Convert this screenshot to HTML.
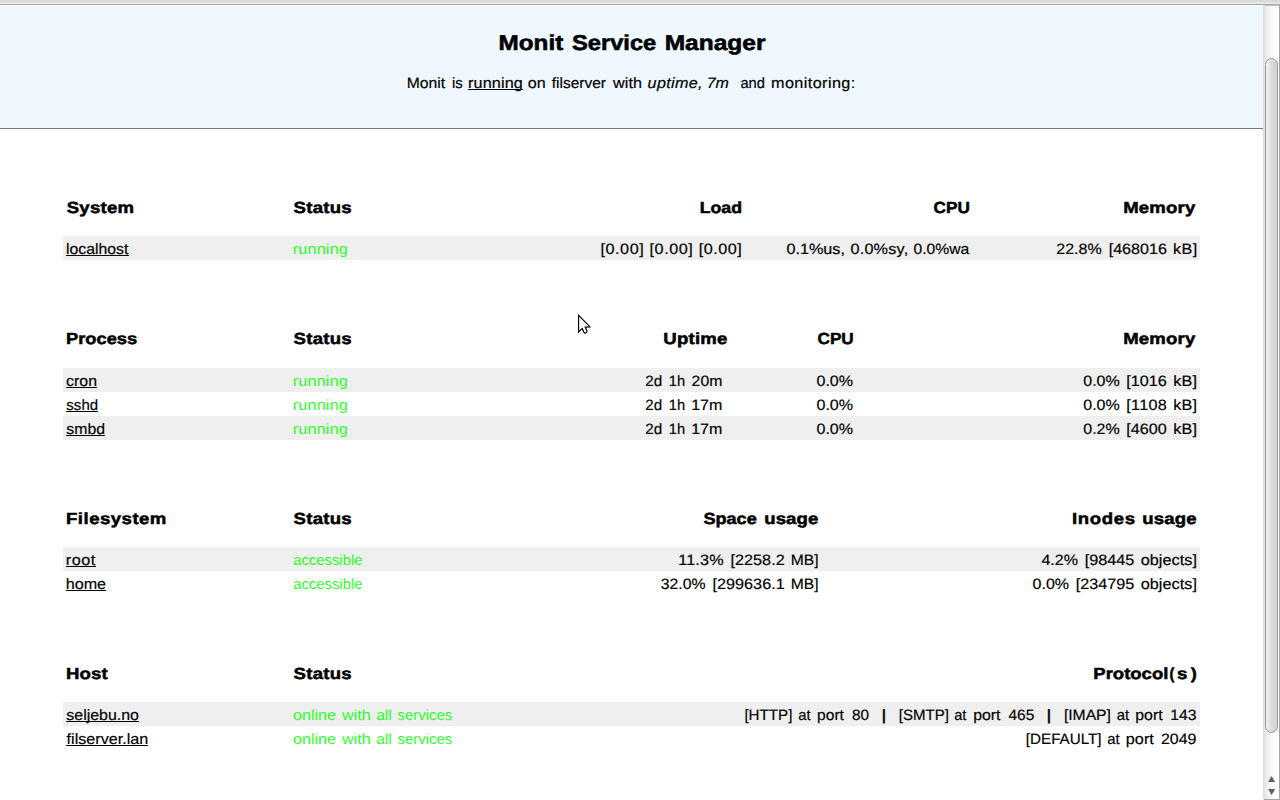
<!DOCTYPE html>
<html lang="en"><head><meta charset="utf-8"><title>Monit: filserver</title>
<style>
html,body{margin:0;padding:0;width:1280px;height:800px;overflow:hidden;background:#fff}
body{position:relative;font-family:"Liberation Sans",sans-serif;}
#strip{position:absolute;left:0;top:0;width:1280px;height:4px;background:linear-gradient(#d5d5d5,#dcdcdc 40%,#ebebeb)}
#stripline{position:absolute;left:0;top:4px;width:1280px;height:1px;background:#a9a9a9}
#head{position:absolute;left:0;top:5px;width:1263px;height:123px;background:#eff7ff;border-bottom:1px solid #777}
#headhl{position:absolute;left:0;top:5px;width:1263px;height:1px;background:#f6fbff}
.stripe{position:absolute;left:63px;width:1137px;height:24px;background:#efefef}
.w{position:absolute;white-space:pre;line-height:normal;transform-origin:0 0;text-rendering:geometricPrecision}
.it{display:inline;margin:0;padding:0;font:inherit;font-weight:inherit;color:inherit;text-decoration:none}
h1.it{font-size:inherit}
.u{position:absolute;height:1px;background:#000;display:block}
.n{font-size:15px;font-weight:400;font-style:normal;color:#000;-webkit-text-stroke:0.18px #000}
.g{font-size:15px;font-weight:400;font-style:normal;color:#00ff00}
.i{font-size:15px;font-weight:400;font-style:italic;color:#000;-webkit-text-stroke:0.18px #000}
.b{font-size:16px;font-weight:700;font-style:normal;color:#000;-webkit-text-stroke:0.5px #000}
.t{font-size:21.5px;font-weight:700;font-style:normal;color:#000;-webkit-text-stroke:0.55px #000}
.s{font-size:15px;font-weight:700;font-style:normal;color:#000;-webkit-text-stroke:0.3px #000}

#sb{position:absolute;left:1263px;top:5px;width:16px;height:794px;background:linear-gradient(90deg,#dadada 0,#e6e6e6 2px,#f1f1f1 5px,#fafafa 9px,#fff 13px)}
#sbr{position:absolute;left:1279px;top:5px;width:1px;height:795px;background:#a9a59a}
#sbb{position:absolute;left:1264px;top:799px;width:16px;height:1px;background:#a9a59a}
#sbt{position:absolute;left:1265px;top:5px;width:14px;height:1px;background:#c9c6bd}
#thumb{position:absolute;left:1265px;top:58px;width:11px;height:673px;border:1px solid #9a9a9a;border-radius:6.5px;background:linear-gradient(90deg,#f4f4f4 0,#e9e9e9 2px,#dcdcdc 6px,#cfcfcf 11px)}
svg{position:absolute;overflow:visible}
</style></head><body>
<div id="strip"></div><div id="stripline"></div>
<div id="head"></div><div id="headhl"></div>
<div class="stripe" style="top:236px"></div><div class="stripe" style="top:368px"></div><div class="stripe" style="top:416px"></div><div class="stripe" style="top:547px"></div><div class="stripe" style="top:702px"></div>
<i class="u" style="left:468px;top:89px;width:55px"></i><i class="u" style="left:66px;top:255px;width:63px"></i><i class="u" style="left:66px;top:387px;width:31px"></i><i class="u" style="left:66px;top:411px;width:32px"></i><i class="u" style="left:66px;top:435px;width:39px"></i><i class="u" style="left:66px;top:566px;width:30px"></i><i class="u" style="left:66px;top:590px;width:40px"></i><i class="u" style="left:66px;top:721px;width:73px"></i><i class="u" style="left:66px;top:745px;width:82px"></i>
<header>
<h1 class="it"><span class="w t" style="left:498px;top:30px;transform:translate(0.49px,0.80px) scaleX(1.1298);">Monit</span> <span class="w t" style="left:571px;top:30px;transform:translate(0.92px,0.80px) scaleX(1.1022);">Service</span> <span class="w t" style="left:664px;top:30px;transform:translate(0.67px,0.80px) scaleX(1.1409);">Manager</span></h1>
<span class="it"><span class="w n" style="left:406px;top:75px;transform:translateX(0.71px) scaleX(1.0471);">Monit</span> <span class="w n" style="left:451px;top:75px;transform:translateX(0.99px) scaleX(0.9917);">is</span></span>
<a class="it"><span class="w n" style="left:468px;top:75px;letter-spacing:0.120px;transform:translateX(0.02px) scaleX(1.0800);">running</span></a>
<span class="it"><span class="w n" style="left:527px;top:75px;transform:translateX(0.82px) scaleX(1.0745);">on</span> <span class="w n" style="left:551px;top:75px;transform:translateX(0.77px) scaleX(1.0309);">filserver</span> <span class="w n" style="left:612px;top:75px;letter-spacing:0.096px;transform:translateX(0.92px) scaleX(1.0800);">with</span></span>
<span class="it"><span class="w i" style="left:647px;top:75px;letter-spacing:0.275px;transform:translateX(0.62px) scaleX(1.0800);">uptime,</span> <span class="w i" style="left:706px;top:75px;transform:translateX(0.63px) scaleX(1.0706);">7m</span></span>
<span class="it"><span class="w n" style="left:740px;top:75px;transform:translateX(0.46px) scaleX(0.9785);">and</span> <span class="w n" style="left:771px;top:75px;letter-spacing:0.382px;transform:translateX(0.02px) scaleX(1.0800);">monitoring:</span></span>
</header>
<section id="system">
<b class="it"><span class="w b" style="left:66px;top:200px;letter-spacing:0.203px;transform:translateX(0.76px) scaleX(1.1600);">System</span></b>
<b class="it"><span class="w b" style="left:293px;top:200px;letter-spacing:0.221px;transform:translateX(0.56px) scaleX(1.1600);">Status</span></b>
<b class="it"><span class="w b" style="left:699px;top:200px;transform:translateX(0.69px) scaleX(1.1067);">Load</span></b>
<b class="it"><span class="w b" style="left:933px;top:200px;transform:translateX(0.56px) scaleX(1.0720);">CPU</span></b>
<b class="it"><span class="w b" style="left:1123px;top:200px;letter-spacing:0.170px;transform:translateX(0.15px) scaleX(1.1600);">Memory</span></b>
<a class="it"><span class="w n" style="left:66px;top:241px;transform:translateX(0.03px) scaleX(1.0521);">localhost</span></a>
<span class="it"><span class="w g" style="left:292px;top:241px;letter-spacing:0.165px;transform:translateX(0.72px) scaleX(1.0800);-webkit-text-stroke:0.15px #efefef;">running</span></span>
<span class="it"><span class="w n" style="left:600px;top:241px;letter-spacing:0.469px;transform:translateX(0.59px) scaleX(1.0800);">[0.00]</span> <span class="w n" style="left:649px;top:241px;letter-spacing:0.515px;transform:translateX(0.54px) scaleX(1.0800);">[0.00]</span> <span class="w n" style="left:698px;top:241px;letter-spacing:0.469px;transform:translateX(0.74px) scaleX(1.0800);">[0.00]</span></span>
<span class="it"><span class="w n" style="left:786px;top:241px;transform:translateX(0.46px) scaleX(1.0791);">0.1%us,</span> <span class="w n" style="left:850px;top:241px;letter-spacing:0.195px;transform:translateX(0.46px) scaleX(1.0800);">0.0%sy,</span> <span class="w n" style="left:913px;top:241px;transform:translateX(0.48px) scaleX(1.0440);">0.0%wa</span></span>
<span class="it"><span class="w n" style="left:1056px;top:241px;transform:translateX(0.29px) scaleX(1.0679);">22.8%</span> <span class="w n" style="left:1108px;top:241px;transform:translateX(0.65px) scaleX(1.0743);">[468016</span> <span class="w n" style="left:1172px;top:241px;letter-spacing:0.384px;transform:translateX(0.91px) scaleX(1.0800);">kB]</span></span>
</section>
<section id="process">
<b class="it"><span class="w b" style="left:66px;top:331px;transform:translateX(0.06px) scaleX(1.1419);">Process</span></b>
<b class="it"><span class="w b" style="left:293px;top:331px;letter-spacing:0.221px;transform:translateX(0.56px) scaleX(1.1600);">Status</span></b>
<b class="it"><span class="w b" style="left:663px;top:331px;letter-spacing:0.191px;transform:translateX(0.33px) scaleX(1.1600);">Uptime</span></b>
<b class="it"><span class="w b" style="left:817px;top:331px;transform:translateX(0.46px) scaleX(1.0751);">CPU</span></b>
<b class="it"><span class="w b" style="left:1123px;top:331px;letter-spacing:0.170px;transform:translateX(0.15px) scaleX(1.1600);">Memory</span></b>
<a class="it"><span class="w n" style="left:66px;top:373px;transform:translateX(0.12px) scaleX(1.0592);">cron</span></a>
<span class="it"><span class="w g" style="left:292px;top:373px;letter-spacing:0.165px;transform:translateX(0.72px) scaleX(1.0800);-webkit-text-stroke:0.15px #efefef;">running</span></span>
<span class="it"><span class="w n" style="left:645px;top:373px;transform:translateX(0.32px) scaleX(1.0167);">2d</span> <span class="w n" style="left:668px;top:373px;transform:translateX(0.77px) scaleX(0.9796);">1h</span> <span class="w n" style="left:691px;top:373px;transform:translateX(0.60px) scaleX(1.0534);">20m</span></span>
<span class="it"><span class="w n" style="left:816px;top:373px;transform:translateX(0.47px) scaleX(1.0703);">0.0%</span></span>
<span class="it"><span class="w n" style="left:1083px;top:373px;transform:translateX(0.27px) scaleX(1.0673);">0.0%</span> <span class="w n" style="left:1126px;top:373px;letter-spacing:0.005px;transform:translateX(0.24px) scaleX(1.0800);">[1016</span> <span class="w n" style="left:1173px;top:373px;letter-spacing:0.176px;transform:translateX(0.16px) scaleX(1.0800);">kB]</span></span>
<a class="it"><span class="w n" style="left:66px;top:397px;transform:translateX(0.37px) scaleX(1.0006);">sshd</span></a>
<span class="it"><span class="w g" style="left:292px;top:397px;letter-spacing:0.165px;transform:translateX(0.72px) scaleX(1.0800);-webkit-text-stroke:0.15px #fff;">running</span></span>
<span class="it"><span class="w n" style="left:645px;top:397px;transform:translateX(0.32px) scaleX(1.0167);">2d</span> <span class="w n" style="left:668px;top:397px;transform:translateX(0.77px) scaleX(0.9796);">1h</span> <span class="w n" style="left:691px;top:397px;transform:translateX(0.18px) scaleX(1.0684);">17m</span></span>
<span class="it"><span class="w n" style="left:816px;top:397px;transform:translateX(0.47px) scaleX(1.0703);">0.0%</span></span>
<span class="it"><span class="w n" style="left:1083px;top:397px;transform:translateX(0.27px) scaleX(1.0673);">0.0%</span> <span class="w n" style="left:1126px;top:397px;letter-spacing:0.281px;transform:translateX(0.24px) scaleX(1.0800);">[1108</span> <span class="w n" style="left:1173px;top:397px;letter-spacing:0.176px;transform:translateX(0.16px) scaleX(1.0800);">kB]</span></span>
<a class="it"><span class="w n" style="left:66px;top:421px;transform:translateX(0.35px) scaleX(1.0568);">smbd</span></a>
<span class="it"><span class="w g" style="left:292px;top:421px;letter-spacing:0.165px;transform:translateX(0.72px) scaleX(1.0800);-webkit-text-stroke:0.15px #efefef;">running</span></span>
<span class="it"><span class="w n" style="left:645px;top:421px;transform:translateX(0.32px) scaleX(1.0167);">2d</span> <span class="w n" style="left:668px;top:421px;transform:translateX(0.77px) scaleX(0.9796);">1h</span> <span class="w n" style="left:691px;top:421px;transform:translateX(0.18px) scaleX(1.0684);">17m</span></span>
<span class="it"><span class="w n" style="left:816px;top:421px;transform:translateX(0.47px) scaleX(1.0703);">0.0%</span></span>
<span class="it"><span class="w n" style="left:1083px;top:421px;transform:translateX(0.27px) scaleX(1.0673);">0.2%</span> <span class="w n" style="left:1126px;top:421px;transform:translateX(0.24px) scaleX(1.0784);">[4600</span> <span class="w n" style="left:1173px;top:421px;letter-spacing:0.176px;transform:translateX(0.16px) scaleX(1.0800);">kB]</span></span>
</section>
<section id="filesystem">
<b class="it"><span class="w b" style="left:66px;top:511px;letter-spacing:0.418px;transform:translateX(0.05px) scaleX(1.1600);">Filesystem</span></b>
<b class="it"><span class="w b" style="left:293px;top:511px;letter-spacing:0.221px;transform:translateX(0.56px) scaleX(1.1600);">Status</span></b>
<b class="it"><span class="w b" style="left:703px;top:511px;transform:translateX(0.46px) scaleX(1.1301);">Space</span> <span class="w b" style="left:764px;top:511px;letter-spacing:0.077px;transform:translateX(0.24px) scaleX(1.1600);">usage</span></b>
<b class="it"><span class="w b" style="left:1071px;top:511px;letter-spacing:0.554px;transform:translateX(0.95px) scaleX(1.1600);">Inodes</span> <span class="w b" style="left:1142px;top:511px;letter-spacing:0.120px;transform:translateX(0.34px) scaleX(1.1600);">usage</span></b>
<a class="it"><span class="w n" style="left:65px;top:552px;letter-spacing:0.516px;transform:translateX(0.72px) scaleX(1.0800);">root</span></a>
<span class="it"><span class="w g" style="left:293px;top:552px;transform:translateX(0.17px) scaleX(0.9892);-webkit-text-stroke:0.15px #efefef;">accessible</span></span>
<span class="it"><span class="w n" style="left:678px;top:552px;letter-spacing:0.135px;transform:translateX(0.26px) scaleX(1.0800);">11.3%</span> <span class="w n" style="left:730px;top:552px;letter-spacing:0.035px;transform:translateX(0.44px) scaleX(1.0800);">[2258.2</span> <span class="w n" style="left:790px;top:552px;transform:translateX(0.81px) scaleX(1.0427);">MB]</span></span>
<span class="it"><span class="w n" style="left:1041px;top:552px;transform:translateX(0.38px) scaleX(1.0700);">4.2%</span> <span class="w n" style="left:1084px;top:552px;letter-spacing:0.015px;transform:translateX(0.64px) scaleX(1.0800);">[98445</span> <span class="w n" style="left:1140px;top:552px;letter-spacing:0.053px;transform:translateX(0.72px) scaleX(1.0800);">objects]</span></span>
<a class="it"><span class="w n" style="left:65px;top:576px;transform:translateX(0.68px) scaleX(1.0776);">home</span></a>
<span class="it"><span class="w g" style="left:293px;top:576px;transform:translateX(0.17px) scaleX(0.9892);-webkit-text-stroke:0.15px #fff;">accessible</span></span>
<span class="it"><span class="w n" style="left:660px;top:576px;transform:translateX(0.69px) scaleX(1.0548);">32.0%</span> <span class="w n" style="left:712px;top:576px;letter-spacing:0.021px;transform:translateX(0.44px) scaleX(1.0800);">[299636.1</span> <span class="w n" style="left:790px;top:576px;transform:translateX(0.81px) scaleX(1.0427);">MB]</span></span>
<span class="it"><span class="w n" style="left:1032px;top:576px;transform:translateX(0.57px) scaleX(1.0673);">0.0%</span> <span class="w n" style="left:1075px;top:576px;transform:translateX(0.74px) scaleX(1.0794);">[234795</span> <span class="w n" style="left:1140px;top:576px;letter-spacing:0.053px;transform:translateX(0.72px) scaleX(1.0800);">objects]</span></span>
</section>
<section id="host">
<b class="it"><span class="w b" style="left:66px;top:666px;letter-spacing:0.125px;transform:translateX(0.05px) scaleX(1.1600);">Host</span></b>
<b class="it"><span class="w b" style="left:293px;top:666px;letter-spacing:0.221px;transform:translateX(0.56px) scaleX(1.1600);">Status</span></b>
<b class="it"><span class="w b" style="left:1093px;top:666px;transform:translateX(0.35px) scaleX(1.1553);">Protocol</span> <span class="w b" style="left:1169px;top:666px;transform:translateX(0.50px) scaleX(0.9171);">(</span> <span class="w b" style="left:1176px;top:666px;transform:translateX(0.94px) scaleX(1.1603);">s</span> <span class="w b" style="left:1190px;top:666px;transform:translateX(0.67px) scaleX(1.1364);">)</span></b>
<a class="it"><span class="w n" style="left:66px;top:707px;transform:translateX(0.35px) scaleX(1.0604);">seljebu.no</span></a>
<span class="it"><span class="w g" style="left:293px;top:707px;transform:translateX(0.02px) scaleX(1.0735);-webkit-text-stroke:0.15px #efefef;">online</span> <span class="w g" style="left:342px;top:707px;transform:translateX(0.02px) scaleX(1.0763);-webkit-text-stroke:0.15px #efefef;">with</span> <span class="w g" style="left:376px;top:707px;transform:translateX(0.14px) scaleX(1.0430);-webkit-text-stroke:0.15px #efefef;">all</span> <span class="w g" style="left:397px;top:707px;transform:translateX(0.48px) scaleX(0.9953);-webkit-text-stroke:0.15px #efefef;">services</span></span>
<span class="it"><span class="w n" style="left:744px;top:707px;transform:translateX(0.41px) scaleX(1.0101);">[HTTP]</span> <span class="w n" style="left:798px;top:707px;transform:translateX(0.26px) scaleX(0.9792);">at</span> <span class="w n" style="left:817px;top:707px;transform:translateX(0.09px) scaleX(1.0375);">port</span> <span class="w n" style="left:852px;top:707px;transform:translateX(0.08px) scaleX(1.0205);">80</span></span>
<span class="it"><span class="w s" style="left:881px;top:707px;transform:translateX(0.91px) scaleX(0.8988);">|</span></span>
<span class="it"><span class="w n" style="left:898px;top:707px;transform:translateX(0.72px) scaleX(1.0030);">[SMTP]</span> <span class="w n" style="left:954px;top:707px;transform:translateX(0.27px) scaleX(0.9708);">at</span> <span class="w n" style="left:973px;top:707px;transform:translateX(0.17px) scaleX(1.0576);">port</span> <span class="w n" style="left:1008px;top:707px;transform:translateX(0.54px) scaleX(1.0273);">465</span></span>
<span class="it"><span class="w s" style="left:1047px;top:707px;transform:translateX(0.01px) scaleX(0.8988);">|</span></span>
<span class="it"><span class="w n" style="left:1063px;top:707px;transform:translateX(0.88px) scaleX(1.0451);">[IMAP]</span> <span class="w n" style="left:1116px;top:707px;transform:translateX(0.66px) scaleX(0.9876);">at</span> <span class="w n" style="left:1135px;top:707px;transform:translateX(0.27px) scaleX(1.0576);">port</span> <span class="w n" style="left:1170px;top:707px;transform:translateX(0.20px) scaleX(1.0466);">143</span></span>
<a class="it"><span class="w n" style="left:66px;top:731px;transform:translateX(0.57px) scaleX(1.0766);">filserver.lan</span></a>
<span class="it"><span class="w g" style="left:293px;top:731px;transform:translateX(0.02px) scaleX(1.0735);-webkit-text-stroke:0.15px #fff;">online</span> <span class="w g" style="left:342px;top:731px;transform:translateX(0.02px) scaleX(1.0763);-webkit-text-stroke:0.15px #fff;">with</span> <span class="w g" style="left:376px;top:731px;transform:translateX(0.14px) scaleX(1.0430);-webkit-text-stroke:0.15px #fff;">all</span> <span class="w g" style="left:397px;top:731px;transform:translateX(0.48px) scaleX(0.9953);-webkit-text-stroke:0.15px #fff;">services</span></span>
<span class="it"><span class="w n" style="left:1025px;top:731px;transform:translateX(0.81px) scaleX(1.0125);">[DEFAULT]</span> <span class="w n" style="left:1107px;top:731px;transform:translateX(0.36px) scaleX(0.9876);">at</span> <span class="w n" style="left:1125px;top:731px;letter-spacing:0.012px;transform:translateX(0.85px) scaleX(1.0800);">port</span> <span class="w n" style="left:1160px;top:731px;transform:translateX(0.89px) scaleX(1.0657);">2049</span></span>
</section>
<div id="sb"></div><div id="sbt"></div><div id="sbr"></div><div id="sbb"></div><div id="thumb"></div>
<svg style="left:1263px;top:768px" width="17" height="32" viewBox="0 0 17 32"><path d="M8.6 7.9 L12.1 14 L5.1 14 Z" fill="#5f5f5f"/><path d="M5.1 21 L12.1 21 L8.6 27 Z" fill="#5f5f5f"/></svg>
<svg style="left:570px;top:308px;filter:drop-shadow(0.6px 0.9px 0.5px rgba(0,0,0,.35))" width="30" height="32" viewBox="0 0 30 32"><path d="M8.6 7.3 L8.6 24 L12.2 20.4 L13.9 24.1 Q14.8 25.5 16.1 24.8 Q17.3 24 16.8 22.7 L15.2 19.1 L19.8 18.7 Z" fill="#fff" stroke="#000" stroke-width="1.15" stroke-linejoin="miter"/></svg>
</body></html>
